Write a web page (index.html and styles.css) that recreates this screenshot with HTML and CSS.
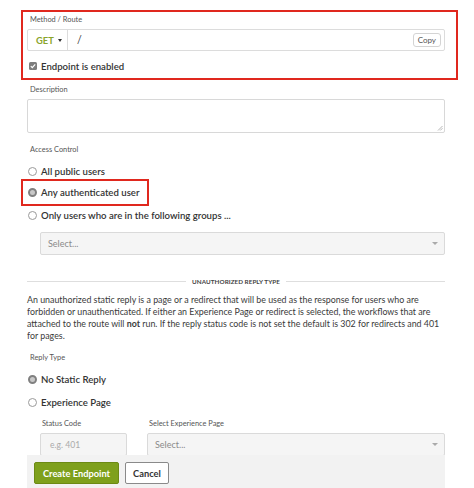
FILE: index.html
```html
<!DOCTYPE html>
<html>
<head>
<meta charset="utf-8">
<link rel="stylesheet" href="styles.css">
</head>
<body>
<div class="page">
  <div class="lbl lbl-first">Method / Route</div>
  <div class="route">
    <div class="method"><span class="get">GET</span><span class="caret"></span></div>
    <div class="path">/</div>
    <span class="copy">Copy</span>
  </div>
  <div class="check-row">
    <span class="cbox"><svg width="8" height="8" viewBox="0 0 8 8"><path d="M1.8 4.1 L3.3 5.6 L6.2 2.4" fill="none" stroke="#fff" stroke-width="1.2"/></svg></span>
    <span class="opt">Endpoint is enabled</span>
  </div>

  <div class="lbl lbl-desc">Description</div>
  <div class="textarea"><svg class="grip" width="6" height="6" viewBox="0 0 6 6"><path d="M1 5.5 L5.5 1 M3.2 5.5 L5.5 3.2" stroke="#999" stroke-width="0.7"/></svg></div>

  <div class="lbl lbl-access">Access Control</div>
  <div class="radio-row r1"><span class="radio"></span><span class="opt">All public users</span></div>
  <div class="radio-row r2"><span class="radio on"></span><span class="opt">Any authenticated user</span></div>
  <div class="radio-row r3"><span class="radio"></span><span class="opt">Only users who are in the following groups ...</span></div>
  <div class="select sel-groups"><span>Select...</span><span class="dcaret"></span></div>

  <div class="divider"><span class="line"></span><span class="dtext">UNAUTHORIZED REPLY TYPE</span><span class="line"></span></div>
  <p class="para">An unauthorized static reply is a page or a redirect that will be used as the response for users who are forbidden or unauthenticated. If either an Experience Page or redirect is selected, the workflows that are attached to the route will <b>not</b> run. If the reply status code is not set the default is 302 for redirects and 401 for pages.</p>

  <div class="lbl lbl-reply">Reply Type</div>
  <div class="radio-row r4"><span class="radio on"></span><span class="opt">No Static Reply</span></div>
  <div class="radio-row r5"><span class="radio"></span><span class="opt">Experience Page</span></div>

  <div class="sub">
    <div class="sub-col col-code">
      <div class="lbl lbl-sub">Status Code</div>
      <div class="input code">e.g. 401</div>
    </div>
    <div class="sub-col col-page">
      <div class="lbl lbl-sub">Select Experience Page</div>
      <div class="select sel-page"><span>Select...</span><span class="dcaret"></span></div>
    </div>
  </div>

  <div class="footer">
    <span class="btn primary">Create Endpoint</span>
    <span class="btn secondary">Cancel</span>
  </div>

  <div class="annot annot-route"></div>
  <div class="annot annot-auth"></div>
</div>
</body>
</html>
```
FILE: styles.css
```css
html, body {
  margin: 0;
  padding: 0;
  background: #fff;
}
body {
  width: 474px;
  height: 488px;
  overflow: hidden;
  font-family: "Lato", "Open Sans", sans-serif;
  color: #3a3a3a;
}
.page {
  position: relative;
  padding: 0 29px 0 27px;
  height: 488px;
  box-sizing: border-box;
}
.lbl {
  font-size: 7.4px;
  line-height: 10px;
  height: 10px;
  color: #555;
  padding-left: 3px;
}
.lbl-first { padding-top: 15px; }
.route {
  margin-top: 4px;
  height: 22px;
  box-sizing: border-box;
  border: 1px solid #dcdcdc;
  border-radius: 2px;
  display: flex;
  align-items: center;
}
.method {
  width: 40px;
  height: 100%;
  box-sizing: border-box;
  border-right: 1px solid #dcdcdc;
  display: flex;
  align-items: center;
  padding-left: 8px;
  gap: 4px;
}
.get {
  color: #8aa52b;
  font-size: 9.4px;
  font-weight: 700;
}
.caret {
  width: 0;
  height: 0;
  border-left: 2.5px solid transparent;
  border-right: 2.5px solid transparent;
  border-top: 3px solid #333;
}
.path {
  flex: 1;
  padding-left: 9px;
  font-size: 10.5px;
}
.copy {
  margin-right: 3px;
  height: 14px;
  box-sizing: border-box;
  padding: 0 4px;
  border: 1px solid #d4d4d4;
  border-radius: 3px;
  font-size: 8px;
  line-height: 12px;
  color: #555;
}
.check-row {
  margin-top: 8px;
  height: 14px;
  display: flex;
  align-items: center;
  padding-left: 2px;
}
.cbox {
  width: 8px;
  height: 8px;
  border-radius: 1.5px;
  background: #7d7d7d;
  display: flex;
  margin-right: 4px;
}
.opt {
  font-size: 9.6px;
  font-weight: 600;
  color: #333;
}
.lbl-desc { margin-top: 12px; }
.textarea {
  margin-top: 4px;
  height: 34px;
  box-sizing: border-box;
  border: 1px solid #d8d8d8;
  border-radius: 2px;
  position: relative;
}
.grip {
  position: absolute;
  right: 1px;
  bottom: 1px;
}
.lbl-access { margin-top: 12px; }
.radio-row {
  height: 16px;
  display: flex;
  align-items: center;
  padding-left: 1px;
}
.r1 { margin-top: 8px; }
.r2 { margin-top: 5px; }
.r3 { margin-top: 7px; }
.r4 { margin-top: 8px; }
.r5 { margin-top: 7px; }
.radio {
  width: 9px;
  height: 9px;
  box-sizing: border-box;
  border: 1px solid #9a9a9a;
  border-radius: 50%;
  margin-right: 4px;
  background: #fff;
}
.radio.on {
  border: 2.5px solid #808080;
  background: #c8c8c8;
}
.select, .input {
  height: 23px;
  box-sizing: border-box;
  border: 1px solid #dadada;
  border-radius: 2px;
  background: #f5f5f5;
  display: flex;
  align-items: center;
  padding: 0 6px 0 7px;
  font-size: 9px;
  color: #8a8a8a;
}
.select { justify-content: space-between; }
.sel-groups {
  margin-top: 9px;
  margin-left: 13px;
}
.dcaret {
  width: 0;
  height: 0;
  border-left: 3px solid transparent;
  border-right: 3px solid transparent;
  border-top: 3px solid #aaa;
}
.divider {
  margin-top: 21px;
  height: 10px;
  display: flex;
  align-items: center;
  gap: 6px;
}
.line {
  flex: 1;
  height: 1px;
  background: #dedede;
}
.dtext {
  font-size: 6.3px;
  font-weight: 700;
  color: #444;
  letter-spacing: 0.05px;
}
.para {
  margin: 8px 0 0 0;
  font-size: 8.85px;
  line-height: 12px;
  color: #3a3a3a;
}
.para b { font-weight: 700; }
.lbl-reply { margin-top: 11px; }
.sub {
  display: flex;
  margin-top: 9px;
  padding-left: 13px;
  gap: 20px;
}
.col-code { width: 87px; }
.col-page { flex: 1; }
.lbl-sub { padding-left: 2px; }
.sub .input, .sub .select { margin-top: 4px; }
.input { color: #aaa; padding-left: 9px; font-size: 8.6px; }
.footer {
  position: absolute;
  left: 27px;
  right: 29px;
  bottom: 0;
  height: 33px;
  background: #f2f2f2;
  display: flex;
  align-items: flex-start;
  padding: 7px 0 0 7px;
  box-sizing: border-box;
  gap: 6px;
}
.btn {
  height: 22px;
  box-sizing: border-box;
  border-radius: 2px;
  font-size: 9.3px;
  font-weight: 700;
  display: flex;
  align-items: center;
  justify-content: center;
}
.primary {
  width: 85px;
  background: #7ea01c;
  border: 1px solid #6c8a14;
  color: #fff;
}
.secondary {
  width: 44px;
  background: #fff;
  border: 1px solid #8a8a8a;
  color: #333;
}
.annot {
  position: absolute;
  border: 2px solid #e0281e;
  box-sizing: border-box;
}
.annot-route {
  left: 21px;
  top: 10px;
  width: 437px;
  height: 70px;
}
.annot-auth {
  left: 21px;
  top: 179px;
  width: 128px;
  height: 27px;
}
```
